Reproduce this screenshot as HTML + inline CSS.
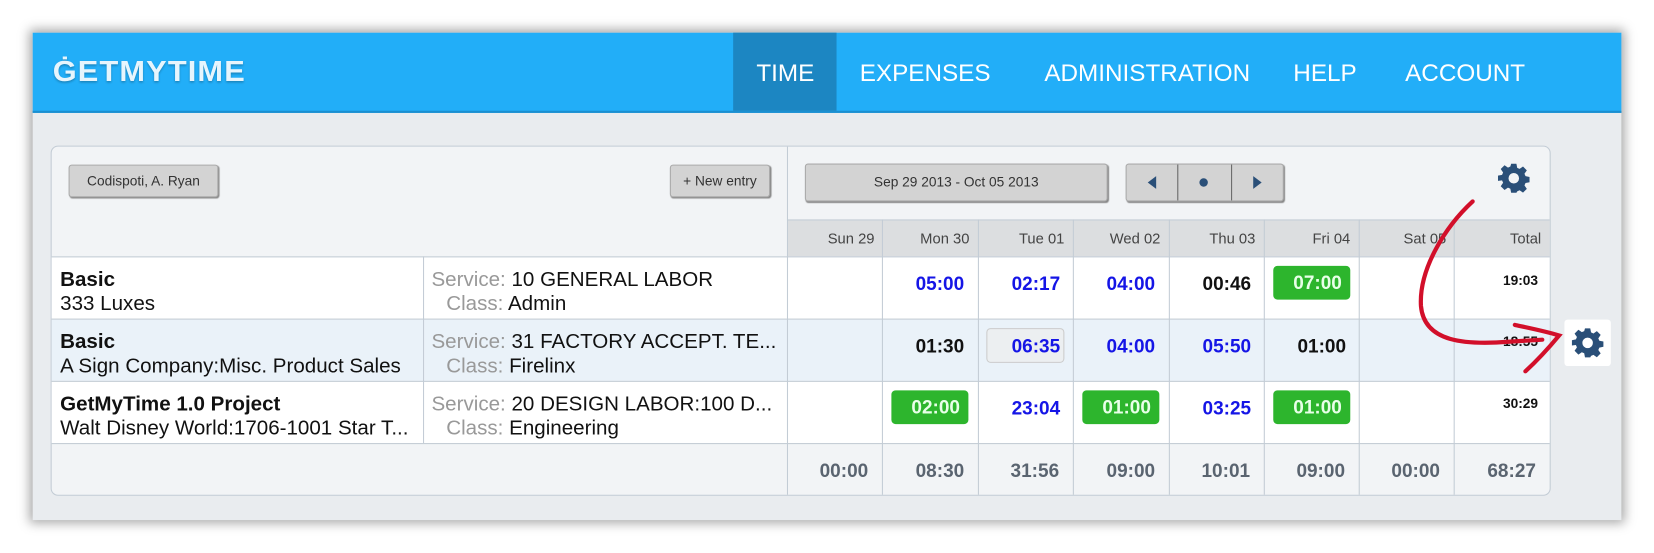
<!DOCTYPE html>
<html><head><meta charset="utf-8"><style>
*{margin:0;padding:0;box-sizing:border-box}
body{width:1654px;height:553px;background:#fff;position:relative;font-family:"Liberation Sans",Arial,sans-serif;overflow:hidden}
#w{position:absolute;left:0;top:0;width:1568px;height:524px;transform:scale(1.0549);transform-origin:0 0}
.frame{position:absolute;left:31px;top:31px;width:1506px;height:462px;background:#e9ecef;box-shadow:0 0 10px 3px rgba(0,0,0,.35)}
.hdr{position:absolute;left:31px;top:31px;width:1506px;height:76px;background:#22aef8;border-bottom:2px solid #1b8fd0}
.logo{position:absolute;left:50px;top:53px;color:#e6f5fd;font-weight:bold;font-size:27px;letter-spacing:1px;text-shadow:0 1px 2px rgba(0,0,0,.25);transform:scaleX(1.08);transform-origin:0 0}
.nav{position:absolute;top:56px;color:#fff;font-size:23px}
.tab{position:absolute;left:695px;top:31px;width:98px;height:74px;background:#1c86c2}
.panel{position:absolute;left:48px;top:138px;width:1422px;height:332px;background:#f2f4f6;border:1px solid #c3ccd5;border-radius:7px}
.btn{position:absolute;background:#d3d3d3;border:1px solid #aaa;border-radius:3px;box-shadow:1px 1px 1px #888;font-size:13px;color:#333;text-align:center}
.a{position:absolute}
.vl{position:absolute;width:1px;background:#c3ccd5}
.hl{position:absolute;height:1px;background:#c3ccd5}
.t{position:absolute;font-size:18px;font-weight:bold;text-align:right;width:80px}
.b{color:#1515e6}.k{color:#111}
.g{position:absolute;background:#2db52d;border-radius:4px;color:#e8ffe8;font-size:18px;font-weight:bold;text-align:right;padding-right:8px;line-height:32px;height:32px}
.dh{position:absolute;top:218px;font-size:14px;color:#444;text-align:right;width:80px}
.ft{position:absolute;top:436px;font-size:18px;font-weight:bold;color:#5a6470;text-align:center;width:90px}
.lbl{color:#999}
.txt{position:absolute;font-size:19.5px;color:#111;white-space:nowrap}
</style></head><body><div id="w">
<div class="frame"></div>
<div class="hdr"></div>
<div class="tab"></div>
<div class="logo">&#x0120;ETMYTIME</div>
<div class="nav" style="left:717px">TIME</div>
<div class="nav" style="left:815px">EXPENSES</div>
<div class="nav" style="left:990px">ADMINISTRATION</div>
<div class="nav" style="left:1226px">HELP</div>
<div class="nav" style="left:1332px">ACCOUNT</div>

<div class="panel"></div>
<div class="a" style="left:49px;top:244px;width:1420px;height:58px;background:#fff"></div>
<div class="a" style="left:49px;top:303px;width:1420px;height:58px;background:#eaf2f9"></div>
<div class="a" style="left:49px;top:362px;width:1420px;height:58px;background:#fff"></div>
<div class="a" style="left:747px;top:209px;width:722px;height:34px;background:#dcdee0"></div>

<div class="btn" style="left:65px;top:156px;width:142px;height:31px;line-height:29px">Codispoti, A. Ryan</div>
<div class="btn" style="left:635px;top:156px;width:95px;height:31px;line-height:29px">+ New entry</div>
<div class="btn" style="left:763px;top:155px;width:287px;height:36px;line-height:34px">Sep 29 2013 - Oct 05 2013</div>
<div class="btn" style="left:1067px;top:155px;width:150px;height:36px"></div>
<div class="vl" style="left:1116px;top:156px;height:34px;background:#666"></div>
<div class="vl" style="left:1167px;top:156px;height:34px;background:#666"></div>
<svg class="a" style="left:1067px;top:155px" width="150" height="36"><path d="M21 18 L29 12 L29 24Z" fill="#2a4f78"/><circle cx="74" cy="18" r="4" fill="#2a4f78"/><path d="M121 12 L129 18 L121 24Z" fill="#2a4f78"/></svg>

<svg class="a" style="left:1420px;top:154px" width="30" height="30" viewBox="0 0 24 24"><path fill="#2a4f78" d="M10 1h4l.6 3.1 1.8.8 2.6-1.8 2.9 2.9-1.8 2.6.8 1.8 3.1.6v4l-3.1.6-.8 1.8 1.8 2.6-2.9 2.9-2.6-1.8-1.8.8L14 23h-4l-.6-3.1-1.8-.8-2.6 1.8-2.9-2.9 1.8-2.6-.8-1.8L0 14v-4l3.1-.6.8-1.8L2.1 5l2.9-2.9 2.6 1.8 1.8-.8zM12 8a4 4 0 100 8 4 4 0 000-8z"/></svg>

<div class="vl" style="left:746px;top:139px;height:330px"></div>
<div class="vl" style="left:401px;top:243px;height:177px"></div>
<div class="vl" style="left:836px;top:208px;height:261px"></div>
<div class="vl" style="left:927px;top:208px;height:261px"></div>
<div class="vl" style="left:1017px;top:208px;height:261px"></div>
<div class="vl" style="left:1108px;top:208px;height:261px"></div>
<div class="vl" style="left:1198px;top:208px;height:261px"></div>
<div class="vl" style="left:1288px;top:208px;height:261px"></div>
<div class="vl" style="left:1378px;top:208px;height:261px"></div>
<div class="hl" style="left:746px;top:208px;width:723px"></div>
<div class="hl" style="left:49px;top:243px;width:1420px"></div>
<div class="hl" style="left:49px;top:302px;width:1420px"></div>
<div class="hl" style="left:49px;top:361px;width:1420px"></div>
<div class="hl" style="left:49px;top:420px;width:1420px"></div>

<div class="dh" style="left:749px">Sun 29</div>
<div class="dh" style="left:839px">Mon 30</div>
<div class="dh" style="left:929px">Tue 01</div>
<div class="dh" style="left:1020px">Wed 02</div>
<div class="dh" style="left:1110px">Thu 03</div>
<div class="dh" style="left:1200px">Fri 04</div>
<div class="dh" style="left:1291px">Sat 05</div>
<div class="dh" style="left:1381px">Total</div>

<div class="txt" style="left:57px;top:254px;font-weight:bold">Basic</div>
<div class="txt" style="left:57px;top:277px">333 Luxes</div>
<div class="txt" style="left:57px;top:313px;font-weight:bold">Basic</div>
<div class="txt" style="left:57px;top:336px">A Sign Company:Misc. Product Sales</div>
<div class="txt" style="left:57px;top:372px;font-weight:bold">GetMyTime 1.0 Project</div>
<div class="txt" style="left:57px;top:395px">Walt Disney World:1706-1001 Star T...</div>

<div class="txt" style="left:409px;top:254px"><span class="lbl">Service:</span> 10 GENERAL LABOR</div>
<div class="txt" style="left:423px;top:277px"><span class="lbl">Class:</span> Admin</div>
<div class="txt" style="left:409px;top:313px"><span class="lbl">Service:</span> 31 FACTORY ACCEPT. TE...</div>
<div class="txt" style="left:423px;top:336px"><span class="lbl">Class:</span> Firelinx</div>
<div class="txt" style="left:409px;top:372px"><span class="lbl">Service:</span> 20 DESIGN LABOR:100 D...</div>
<div class="txt" style="left:423px;top:395px"><span class="lbl">Class:</span> Engineering</div>

<div class="t b" style="left:834px;top:259px">05:00</div>
<div class="t b" style="left:925px;top:259px">02:17</div>
<div class="t b" style="left:1015px;top:259px">04:00</div>
<div class="t k" style="left:1106px;top:259px">00:46</div>
<div class="g" style="left:1207px;top:252px;width:73px">07:00</div>
<div class="t k" style="left:1378px;top:258px;font-size:13px">19:03</div>
<div class="t k" style="left:834px;top:318px">01:30</div>
<div class="a" style="left:935px;top:311px;width:74px;height:33px;background:#eceff1;border:1px solid #ccc;border-radius:4px"></div>
<div class="t b" style="left:925px;top:318px">06:35</div>
<div class="t b" style="left:1015px;top:318px">04:00</div>
<div class="t b" style="left:1106px;top:318px">05:50</div>
<div class="t k" style="left:1196px;top:318px">01:00</div>
<div class="t k" style="left:1378px;top:316px;font-size:13px">18:55</div>
<div class="g" style="left:845px;top:370px;width:73px">02:00</div>
<div class="t b" style="left:925px;top:377px">23:04</div>
<div class="g" style="left:1026px;top:370px;width:73px">01:00</div>
<div class="t b" style="left:1106px;top:377px">03:25</div>
<div class="g" style="left:1207px;top:370px;width:73px">01:00</div>
<div class="t k" style="left:1378px;top:375px;font-size:13px">30:29</div>

<div class="ft" style="left:755px">00:00</div>
<div class="ft" style="left:846px">08:30</div>
<div class="ft" style="left:936px">31:56</div>
<div class="ft" style="left:1027px">09:00</div>
<div class="ft" style="left:1117px">10:01</div>
<div class="ft" style="left:1207px">09:00</div>
<div class="ft" style="left:1297px">00:00</div>
<div class="ft" style="left:1388px">68:27</div>

<div class="a" style="left:1483px;top:303px;width:44px;height:44px;background:#fff;border-radius:3px"></div>
<svg class="a" style="left:1490px;top:310px" width="30" height="30" viewBox="0 0 24 24"><path fill="#2a4f78" d="M10 1h4l.6 3.1 1.8.8 2.6-1.8 2.9 2.9-1.8 2.6.8 1.8 3.1.6v4l-3.1.6-.8 1.8 1.8 2.6-2.9 2.9-2.6-1.8-1.8.8L14 23h-4l-.6-3.1-1.8-.8-2.6 1.8-2.9-2.9 1.8-2.6-.8-1.8L0 14v-4l3.1-.6.8-1.8L2.1 5l2.9-2.9 2.6 1.8 1.8-.8zM12 8a4 4 0 100 8 4 4 0 000-8z"/></svg>

<svg class="a" style="left:0;top:0" width="1568" height="524"><g fill="none" stroke="#d20f2a" stroke-width="4" stroke-linecap="round"><path d="M1396 191 C1370 215 1345 255 1347 290 C1350 325 1390 327 1430 324 L1462 322"/><path d="M1436 308 C1450 311 1465 314 1478 318 C1468 330 1457 342 1446 352"/></g></svg>
</div></body></html>
